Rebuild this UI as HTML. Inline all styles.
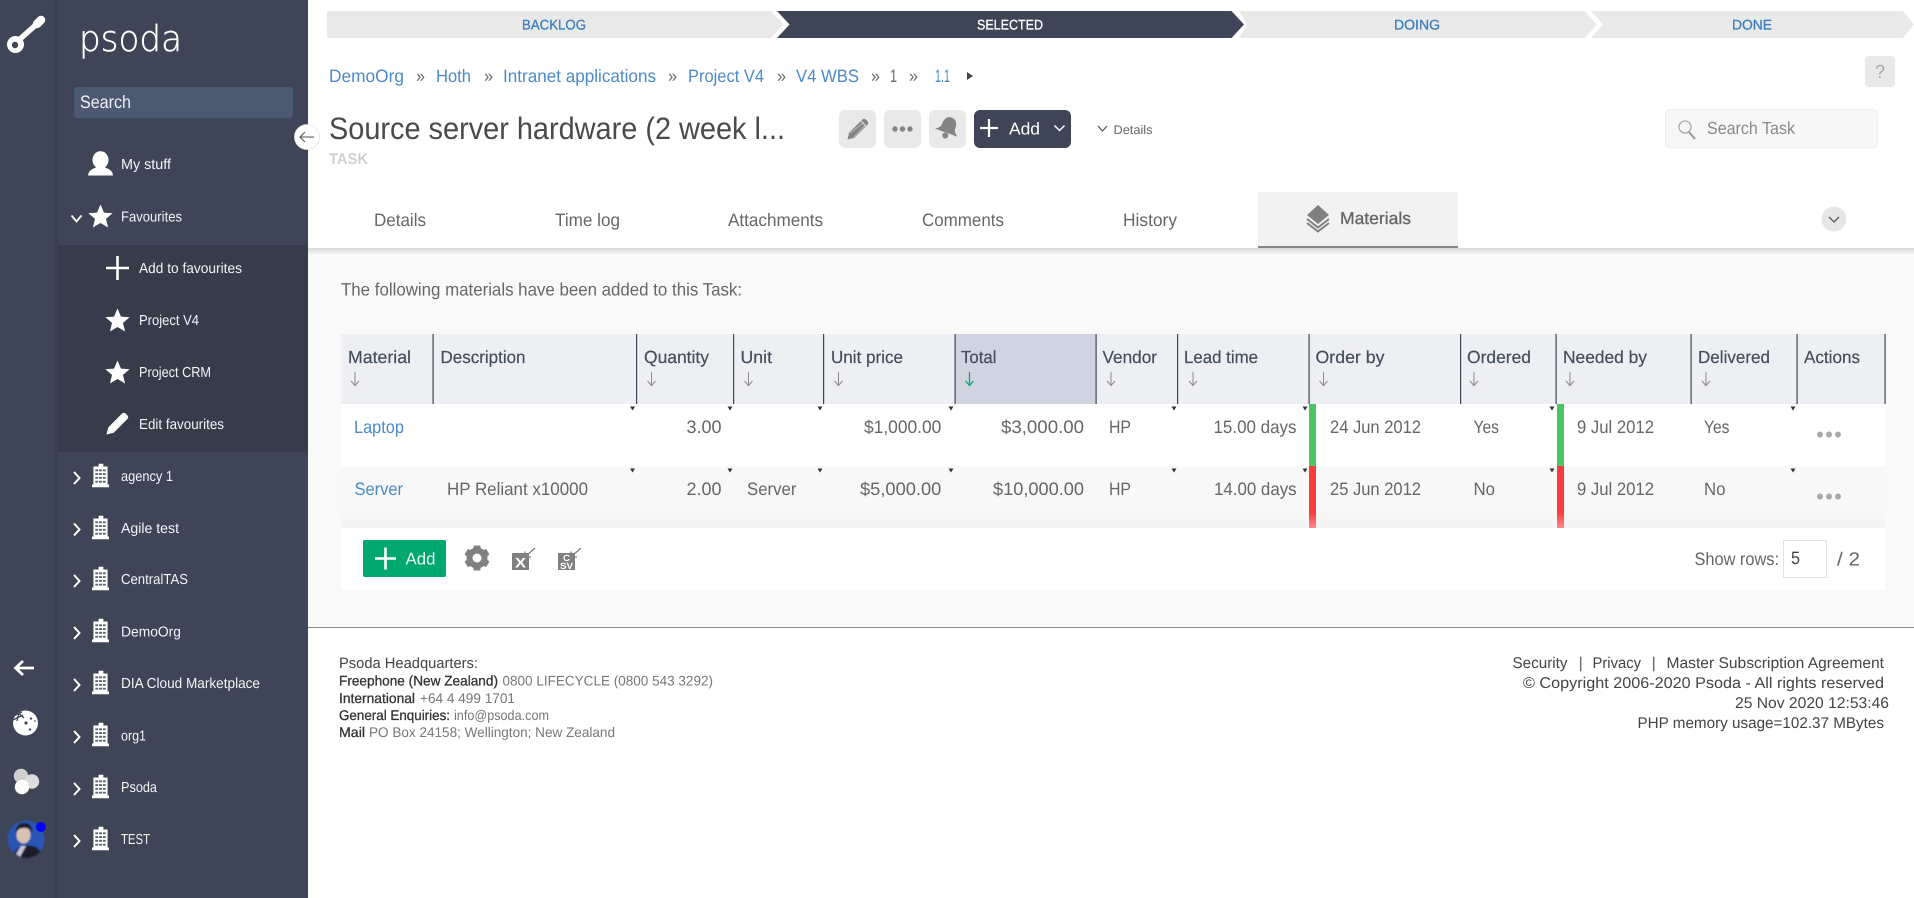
<!DOCTYPE html>
<html lang="en">
<head>
<meta charset="utf-8">
<title>Psoda - Materials</title>
<style>
html,body{margin:0;padding:0;background:#fff;width:1914px;height:898px;overflow:hidden}
svg{display:block}
text{font-family:"Liberation Sans","DejaVu Sans",sans-serif;text-rendering:geometricPrecision}
.s{fill:#f2f4f7;font-size:14.5px}
.h{fill:#444e5e;stroke:#444e5e;stroke-width:.2px;font-size:17.5px}
.c{fill:#666;font-size:18px}
.l{fill:#4a8ac9;font-size:18px}
.t{fill:#666;font-size:18px}
.b{fill:#4a8ac9;font-size:18px}
.p{fill:#3a7fc1;stroke:#3a7fc1;stroke-width:.3px;font-size:14px}
.f{fill:#333;stroke:#333;stroke-width:.3px;font-size:14px}
.g{fill:#777;font-size:14px}
.r{fill:#444;font-size:15.5px}
</style>
</head>
<body>
<svg xmlns="http://www.w3.org/2000/svg" width="1914" height="898" viewBox="0 0 1914 898">
<defs>
<linearGradient id="sh" x1="0" y1="0" x2="0" y2="1"><stop offset="0" stop-color="#d8d8d8"/><stop offset="1" stop-color="#f9f9f9"/></linearGradient>
<linearGradient id="rail" x1="0" y1="0" x2="1" y2="0"><stop offset="0" stop-color="#3d4556"/><stop offset="1" stop-color="#383f4e"/></linearGradient>
<linearGradient id="red" x1="0" y1="0" x2="0" y2="1"><stop offset="0" stop-color="#fb3c3c"/><stop offset=".75" stop-color="#fb3c3c"/><stop offset="1" stop-color="#f88"/></linearGradient>
<linearGradient id="row" x1="0" y1="0" x2="0" y2="1"><stop offset="0" stop-color="#f8f8f8"/><stop offset=".7" stop-color="#f8f8f8"/><stop offset="1" stop-color="#f3f3f3"/></linearGradient>
<filter id="soft"><feGaussianBlur stdDeviation=".7"/></filter>
<symbol id="star" viewBox="0 0 26 26" overflow="visible"><polygon points="13,0.5 16.6,9 25.6,9.6 18.7,15.5 20.9,24.5 13,19.7 5.1,24.5 7.3,15.5 0.4,9.6 9.4,9" fill="#fff"/></symbol>
<symbol id="bld" viewBox="0 0 18 25" overflow="visible">
<path d="M7 0h5v3H7zM1.500 3h15v19h-15z" fill="#fff"/>
<path d="M0 22h18v3H0z" fill="#fff"/>
<path d="M3.500 6h3v2h-3zM7.500 6h3v2h-3zM11.500 6h3v2h-3zM3.500 10h3v2h-3zM7.500 10h3v2h-3zM11.500 10h3v2h-3zM3.500 14h3v2h-3zM7.500 14h3v2h-3zM11.500 14h3v2h-3zM3.500 18h3v2h-3zM7.500 18h3v2h-3zM11.500 18h3v2h-3z" fill="#5a6274"/>
</symbol>
<symbol id="pen" viewBox="0 0 24 24" overflow="visible"><path d="M0.5 23.500 2.400 16 16.800 1.600c1-1 2.600-1 3.600 0l2 2c1 1 1 2.600 0 3.600L8 21.600z" fill="currentColor"/><path d="M3.600 16.400 17.800 5.200M7.600 20.400 20 8" stroke="#fff" stroke-opacity=".45" stroke-width="1" fill="none"/><path d="M15.200 3.200 20.800 8.800" stroke="#fff" stroke-opacity=".7" stroke-width="1.200"/></symbol>
</defs>

<!-- main backgrounds -->
<rect width="1914" height="898" fill="#fff"/>
<rect x="308" y="248" width="1606" height="379" fill="#f9f9f9"/>
<rect x="308" y="248" width="1606" height="7" fill="url(#sh)"/>
<rect x="308" y="627" width="1606" height="1" fill="#8a8a8a"/>

<!-- sidebar -->
<rect width="308" height="898" fill="#3d4556"/>
<rect x="52" width="6" height="898" fill="url(#rail)"/>
<rect x="58" y="245" width="250" height="207" fill="#363c49"/>
<path d="M20 39 38 23" stroke="#fff" stroke-width="5.500" stroke-linecap="round"/>
<path d="M37 24 41 20" stroke="#fff" stroke-width="8.500" stroke-linecap="round"/>
<circle cx="15.500" cy="44.500" r="8.500" fill="#fff"/><circle cx="15" cy="45" r="3.200" fill="#3d4556"/>
<text x="79" y="51" style="font-family:'DejaVu Sans',sans-serif;font-weight:200;font-size:36px;stroke:#fff;stroke-width:.4px" fill="#fff" textLength="103" lengthAdjust="spacingAndGlyphs">psoda</text>
<rect x="74" y="87" width="219" height="31" rx="3" fill="#4d5970"/>
<text x="80" y="108" fill="#eef0f3" font-size="18" textLength="51" lengthAdjust="spacingAndGlyphs">Search</text>

<ellipse cx="100.500" cy="160" rx="8" ry="8.800" fill="#fff"/>
<path d="M88 175.500c.5-5 4-6.500 8-8h9c4 1.500 7.500 3 8 8z" fill="#fff"/>
<text class="s" x="121" y="169" textLength="50" lengthAdjust="spacingAndGlyphs">My stuff</text>
<path d="M71.500 215.500 76.500 221.500 81.500 215.500" fill="none" stroke="#fff" stroke-width="1.800"/>
<use href="#star" x="88" y="204" width="25" height="25"/>
<text class="s" x="121" y="221.500" textLength="61" lengthAdjust="spacingAndGlyphs">Favourites</text>
<path d="M117.500 256v24M106 268h23" stroke="#fff" stroke-width="2.600"/>
<text class="s" x="139" y="273" textLength="103" lengthAdjust="spacingAndGlyphs">Add to favourites</text>
<use href="#star" x="105" y="308" width="25" height="25"/>
<text class="s" x="139" y="325" textLength="60" lengthAdjust="spacingAndGlyphs">Project V4</text>
<use href="#star" x="105" y="360" width="25" height="25"/>
<text class="s" x="139" y="377" textLength="72" lengthAdjust="spacingAndGlyphs">Project CRM</text>
<use href="#pen" x="106" y="412" width="23" height="23" color="#fff"/>
<text class="s" x="139" y="429" textLength="85" lengthAdjust="spacingAndGlyphs">Edit favourites</text>

<g fill="none" stroke="#fff" stroke-width="2">
<path d="M74 472 79.500 478 74 484"/><path d="M74 523.500 79.500 529.500 74 535.500"/><path d="M74 575 79.500 581 74 587"/><path d="M74 627 79.500 633 74 639"/><path d="M74 679 79.500 685 74 691"/><path d="M74 731 79.500 737 74 743"/><path d="M74 783 79.500 789 74 795"/><path d="M74 835 79.500 841 74 847"/>
</g>
<use href="#bld" x="92" y="463" width="17" height="25"/>
<use href="#bld" x="92" y="515" width="17" height="25"/>
<use href="#bld" x="92" y="566" width="17" height="25"/>
<use href="#bld" x="92" y="618" width="17" height="25"/>
<use href="#bld" x="92" y="670" width="17" height="25"/>
<use href="#bld" x="92" y="722" width="17" height="25"/>
<use href="#bld" x="92" y="774" width="17" height="25"/>
<use href="#bld" x="92" y="826" width="17" height="25"/>
<text class="s" x="121" y="481" textLength="52" lengthAdjust="spacingAndGlyphs">agency 1</text>
<text class="s" x="121" y="533" textLength="58" lengthAdjust="spacingAndGlyphs">Agile test</text>
<text class="s" x="121" y="584" textLength="67" lengthAdjust="spacingAndGlyphs">CentralTAS</text>
<text class="s" x="121" y="636.500" textLength="60" lengthAdjust="spacingAndGlyphs">DemoOrg</text>
<text class="s" x="121" y="688" textLength="139" lengthAdjust="spacingAndGlyphs">DIA Cloud Marketplace</text>
<text class="s" x="121" y="740.500" textLength="25" lengthAdjust="spacingAndGlyphs">org1</text>
<text class="s" x="121" y="792" textLength="36" lengthAdjust="spacingAndGlyphs">Psoda</text>
<text class="s" x="121" y="844" textLength="29" lengthAdjust="spacingAndGlyphs">TEST</text>

<!-- rail bottom icons -->
<path d="M16 668h18M23 661l-7.500 7 7.500 7" fill="none" stroke="#fff" stroke-width="2.800"/>
<circle cx="25.500" cy="723" r="12.500" fill="#fff"/>
<path d="M13 716l9-4M16 711l8 7M13 720l10-5M19 713l-2 8" stroke="#3d4556" stroke-width="1.300"/>
<path d="M26 721l2 2-2 2-2-2zM31 717l1.500 1.500-1.500 1.500-1.500-1.500zM35 720l1 1-1 1-1-1zM30 728l1.500 1.500-1.500 1.500-1.500-1.500z" fill="#3d4556"/>
<circle cx="21" cy="776" r="7.200" fill="#cfcfcf"/>
<circle cx="32" cy="781.500" r="7.200" fill="#dcdcdc"/>
<circle cx="22" cy="787" r="7.200" fill="#fff"/>
<g filter="url(#soft)">
<circle cx="26" cy="839" r="18.500" fill="#2a55b5"/>
<path d="M14 853c3-5 7-7 11-8l8 1c4 1 6 3 7 6a18.500 18.500 0 0 1-26 1z" fill="#1a1d2a"/>
<path d="M21 846l5 0-6 11-4-3z" fill="#c3c6dc"/>
<ellipse cx="23.500" cy="835" rx="7" ry="8.500" fill="#d8c0b2"/>
<path d="M16 833c-1-7 4-11 9-10 5 0 8 4 7 10-1-4-4-5-8-5s-6 1-8 5z" fill="#1d2230"/>
</g>
<circle cx="41" cy="827" r="5" fill="#0000ff"/>

<!-- collapse circle -->
<circle cx="307" cy="137" r="12.500" fill="#fff" stroke="#e5e5e5" stroke-width=".8"/>
<path d="M300 137h14M305 132l-5 5 5 5" fill="none" stroke="#555" stroke-width="1.100"/>

<!-- progress -->
<polygon points="327,11 771,11 783.500,24.500 771,38 327,38" fill="#e9e9e9"/>
<polygon points="777,11 1231.500,11 1244,24.500 1231.500,38 777,38 789.500,24.500" fill="#3d4556"/>
<polygon points="1239,11 1585,11 1596.500,24.500 1585,38 1239,38 1247,24.500" fill="#e9e9e9"/>
<polygon points="1591,11 1903,11 1914,24.500 1903,38 1591,38 1603,24.500" fill="#e9e9e9"/>
<text class="p" x="522" y="29.500" textLength="64" lengthAdjust="spacingAndGlyphs">BACKLOG</text>
<text class="p" x="977" y="29.500" textLength="66" lengthAdjust="spacingAndGlyphs" style="fill:#fff;stroke:#fff">SELECTED</text>
<text class="p" x="1394" y="29.500" textLength="46" lengthAdjust="spacingAndGlyphs">DOING</text>
<text class="p" x="1732" y="29.500" textLength="40" lengthAdjust="spacingAndGlyphs">DONE</text>

<!-- breadcrumb -->
<text class="b" x="329" y="82" textLength="75" lengthAdjust="spacingAndGlyphs">DemoOrg</text>
<text class="t" x="416" y="82" textLength="9" lengthAdjust="spacingAndGlyphs">»</text>
<text class="b" x="436" y="82" textLength="35" lengthAdjust="spacingAndGlyphs">Hoth</text>
<text class="t" x="484" y="82" textLength="9" lengthAdjust="spacingAndGlyphs">»</text>
<text class="b" x="503" y="82" textLength="153" lengthAdjust="spacingAndGlyphs">Intranet applications</text>
<text class="t" x="668" y="82" textLength="9" lengthAdjust="spacingAndGlyphs">»</text>
<text class="b" x="688" y="82" textLength="76" lengthAdjust="spacingAndGlyphs">Project V4</text>
<text class="t" x="777" y="82" textLength="9" lengthAdjust="spacingAndGlyphs">»</text>
<text class="b" x="796" y="82" textLength="63" lengthAdjust="spacingAndGlyphs">V4 WBS</text>
<text class="t" x="871" y="82" textLength="9" lengthAdjust="spacingAndGlyphs">»</text>
<text class="t" x="890" y="82" textLength="7" lengthAdjust="spacingAndGlyphs">1</text>
<text class="t" x="909" y="82" textLength="9" lengthAdjust="spacingAndGlyphs">»</text>
<text class="b" x="935" y="82" textLength="15" lengthAdjust="spacingAndGlyphs">1.1</text>
<polygon points="967,72 973,76 967,80" fill="#444"/>
<rect x="1865" y="56" width="30" height="31" rx="4" fill="#e9e9e9"/>
<text x="1875" y="78" font-size="19" fill="#aaa" textLength="10" lengthAdjust="spacingAndGlyphs">?</text>

<!-- title -->
<text x="329" y="139" font-size="31" fill="#4a4a4a" textLength="456" lengthAdjust="spacingAndGlyphs">Source server hardware (2 week l...</text>
<text x="329" y="164" font-size="15.500" font-weight="bold" fill="#cfcfcf" textLength="39" lengthAdjust="spacingAndGlyphs">TASK</text>

<rect x="839" y="110" width="37" height="38" rx="6" fill="#e9e9e9"/>
<use href="#pen" x="847" y="118" width="22" height="22" color="#848484"/>
<rect x="884" y="110" width="37" height="38" rx="6" fill="#e9e9e9"/>
<circle cx="895" cy="129" r="2.700" fill="#848484"/><circle cx="902.500" cy="129" r="2.700" fill="#848484"/><circle cx="910" cy="129" r="2.700" fill="#848484"/>
<rect x="929" y="110" width="37" height="38" rx="6" fill="#e9e9e9"/>
<g transform="rotate(20 948 128)" fill="#848484"><path d="M948 117c5 0 7 4 7 9 0 3 2 5 5 7H936c3-2 5-4 5-7 0-5 2-9 7-9z"/><circle cx="948" cy="136" r="3"/></g>
<rect x="974" y="110" width="97" height="38" rx="6" fill="#3d4556"/>
<path d="M989 119v18M980 128h18" stroke="#fff" stroke-width="2.200" fill="none"/>
<text x="1009" y="134.500" font-size="17" fill="#fff" textLength="31" lengthAdjust="spacingAndGlyphs">Add</text>
<path d="M1054.500 125.500 1059.500 130.500 1064.500 125.500" fill="none" stroke="#fff" stroke-width="1.500"/>
<path d="M1098 126 1102.500 131 1107 126" fill="none" stroke="#555" stroke-width="1.200"/>
<text x="1113.500" y="134" font-size="12.500" fill="#666" textLength="39" lengthAdjust="spacingAndGlyphs">Details</text>

<rect x="1665.500" y="109.500" width="212" height="38.500" rx="5" fill="#f7f7f7" stroke="#ececec"/>
<circle cx="1685" cy="127" r="6" fill="none" stroke="#aaa" stroke-width="1.300"/>
<path d="M1689 132l6 7" stroke="#999" stroke-width="2"/>
<text x="1707" y="134" font-size="17.500" fill="#8a8a8a" textLength="88" lengthAdjust="spacingAndGlyphs">Search Task</text>

<!-- tabs -->
<text class="t" x="374" y="226" textLength="52" lengthAdjust="spacingAndGlyphs">Details</text>
<text class="t" x="555" y="226" textLength="65" lengthAdjust="spacingAndGlyphs">Time log</text>
<text class="t" x="728" y="226" textLength="95" lengthAdjust="spacingAndGlyphs">Attachments</text>
<text class="t" x="922" y="226" textLength="82" lengthAdjust="spacingAndGlyphs">Comments</text>
<text class="t" x="1123" y="226" textLength="54" lengthAdjust="spacingAndGlyphs">History</text>
<rect x="1258" y="192" width="200" height="56" fill="#f2f2f2"/>
<rect x="1258" y="246" width="200" height="2" fill="#868686"/>
<polygon points="1318,205 1329,215 1318,224 1307,215" fill="#808080"/>
<path d="M1307 219l11 8.500 11-8.500M1307 223l11 8.500 11-8.500" fill="none" stroke="#808080" stroke-width="2"/>
<text x="1340" y="224" font-size="17" fill="#666" stroke="#666" stroke-width=".3" textLength="71" lengthAdjust="spacingAndGlyphs">Materials</text>
<circle cx="1834" cy="219" r="12.500" fill="#e6e6e6"/>
<path d="M1829 217l5 5 5-5" fill="none" stroke="#555" stroke-width="1.300"/>

<text class="t" x="341" y="295.500" textLength="401" lengthAdjust="spacingAndGlyphs">The following materials have been added to this Task:</text>

<!-- table -->
<rect x="341" y="334" width="1544" height="256" fill="#fff"/>
<rect x="341" y="334" width="1544" height="70" fill="#eeeff3"/>
<rect x="955" y="334" width="141" height="70" fill="#d0d4e0"/>
<rect x="341" y="466" width="1544" height="62" fill="url(#row)"/>
<g fill="#3d4556">
<rect x="432.500" y="334" width="1.200" height="70"/><rect x="636" y="334" width="1.200" height="70"/><rect x="733" y="334" width="1.200" height="70"/><rect x="823" y="334" width="1.200" height="70"/><rect x="954.500" y="334" width="1.200" height="70"/><rect x="1095.500" y="334" width="1.200" height="70"/><rect x="1177" y="334" width="1.200" height="70"/><rect x="1308.500" y="334" width="1.200" height="70"/><rect x="1460" y="334" width="1.200" height="70"/><rect x="1555.500" y="334" width="1.200" height="70"/><rect x="1690.500" y="334" width="1.200" height="70"/><rect x="1796.500" y="334" width="1.200" height="70"/><rect x="1884.500" y="334" width="1.200" height="70"/>
</g>
<text class="h" x="348" y="363" textLength="63" lengthAdjust="spacingAndGlyphs">Material</text>
<text class="h" x="440.500" y="363" textLength="85" lengthAdjust="spacingAndGlyphs">Description</text>
<text class="h" x="644" y="363" textLength="65" lengthAdjust="spacingAndGlyphs">Quantity</text>
<text class="h" x="740.500" y="363" textLength="31.500" lengthAdjust="spacingAndGlyphs">Unit</text>
<text class="h" x="831" y="363" textLength="72" lengthAdjust="spacingAndGlyphs">Unit price</text>
<text class="h" x="961" y="363" textLength="35.500" lengthAdjust="spacingAndGlyphs">Total</text>
<text class="h" x="1102.500" y="363" textLength="54.500" lengthAdjust="spacingAndGlyphs">Vendor</text>
<text class="h" x="1184" y="363" textLength="74" lengthAdjust="spacingAndGlyphs">Lead time</text>
<text class="h" x="1315.500" y="363" textLength="69" lengthAdjust="spacingAndGlyphs">Order by</text>
<text class="h" x="1467" y="363" textLength="64" lengthAdjust="spacingAndGlyphs">Ordered</text>
<text class="h" x="1563" y="363" textLength="84" lengthAdjust="spacingAndGlyphs">Needed by</text>
<text class="h" x="1698" y="363" textLength="72" lengthAdjust="spacingAndGlyphs">Delivered</text>
<text class="h" x="1804" y="363" textLength="56" lengthAdjust="spacingAndGlyphs">Actions</text>
<g fill="none" stroke="#888" stroke-width="1">
<path d="M355 372v13M351 381l4 4.500 4-4.500"/><path d="M651.500 372v13M647.500 381l4 4.500 4-4.500"/><path d="M748.500 372v13M744.500 381l4 4.500 4-4.500"/><path d="M838.500 372v13M834.500 381l4 4.500 4-4.500"/>
<path d="M1111 372v13M1107 381l4 4.500 4-4.500"/><path d="M1193 372v13M1189 381l4 4.500 4-4.500"/><path d="M1323.500 372v13M1319.500 381l4 4.500 4-4.500"/><path d="M1474 372v13M1470 381l4 4.500 4-4.500"/><path d="M1570 372v13M1566 381l4 4.500 4-4.500"/><path d="M1706 372v13M1702 381l4 4.500 4-4.500"/>
<path d="M969.500 372v13M965.500 381l4 4.500 4-4.500" stroke="#00a86f" stroke-width="1.200"/>
</g>
<rect x="1309" y="404" width="7" height="62" fill="#4cc464"/>
<rect x="1557" y="404" width="7" height="62" fill="#4cc464"/>
<rect x="1309" y="466" width="7" height="62" fill="url(#red)"/>
<rect x="1557" y="466" width="7" height="62" fill="url(#red)"/>
<g fill="#333">
<path d="M630 406.500h5l-2.500 4zM727.500 406.500h5l-2.500 4zM817.500 406.500h5l-2.500 4zM948.500 406.500h5l-2.500 4zM1171.500 406.500h5l-2.500 4zM1302.500 406.500h5l-2.500 4zM1549.500 406.500h5l-2.500 4zM1790.500 406.500h5l-2.500 4z"/>
<path d="M630 468.500h5l-2.500 4zM727.500 468.500h5l-2.500 4zM817.500 468.500h5l-2.500 4zM948.500 468.500h5l-2.500 4zM1171.500 468.500h5l-2.500 4zM1302.500 468.500h5l-2.500 4zM1549.500 468.500h5l-2.500 4zM1790.500 468.500h5l-2.500 4z"/>
</g>

<text class="l" x="354" y="433" textLength="50" lengthAdjust="spacingAndGlyphs">Laptop</text>
<text class="c" x="686.500" y="433" textLength="35" lengthAdjust="spacingAndGlyphs">3.00</text>
<text class="c" x="864" y="433" textLength="77.300" lengthAdjust="spacingAndGlyphs">$1,000.00</text>
<text class="c" x="1001" y="433" textLength="83" lengthAdjust="spacingAndGlyphs">$3,000.00</text>
<text class="c" x="1109" y="433" textLength="22" lengthAdjust="spacingAndGlyphs">HP</text>
<text class="c" x="1213.500" y="433" textLength="83" lengthAdjust="spacingAndGlyphs">15.00 days</text>
<text class="c" x="1330" y="433" textLength="91" lengthAdjust="spacingAndGlyphs">24 Jun 2012</text>
<text class="c" x="1473.500" y="433" textLength="25.500" lengthAdjust="spacingAndGlyphs">Yes</text>
<text class="c" x="1577" y="433" textLength="77" lengthAdjust="spacingAndGlyphs">9 Jul 2012</text>
<text class="c" x="1704" y="433" textLength="25.500" lengthAdjust="spacingAndGlyphs">Yes</text>
<circle cx="1820" cy="434.500" r="3" fill="#a8a8a8"/><circle cx="1829" cy="434.500" r="3" fill="#a8a8a8"/><circle cx="1838" cy="434.500" r="3" fill="#a8a8a8"/>

<text class="l" x="354.500" y="495" textLength="48.500" lengthAdjust="spacingAndGlyphs">Server</text>
<text class="c" x="447" y="495" textLength="141" lengthAdjust="spacingAndGlyphs">HP Reliant x10000</text>
<text class="c" x="686.500" y="495" textLength="35" lengthAdjust="spacingAndGlyphs">2.00</text>
<text class="c" x="747" y="495" textLength="49.500" lengthAdjust="spacingAndGlyphs">Server</text>
<text class="c" x="860" y="495" textLength="81.300" lengthAdjust="spacingAndGlyphs">$5,000.00</text>
<text class="c" x="993" y="495" textLength="91" lengthAdjust="spacingAndGlyphs">$10,000.00</text>
<text class="c" x="1109" y="495" textLength="22" lengthAdjust="spacingAndGlyphs">HP</text>
<text class="c" x="1214" y="495" textLength="82.600" lengthAdjust="spacingAndGlyphs">14.00 days</text>
<text class="c" x="1330" y="495" textLength="91" lengthAdjust="spacingAndGlyphs">25 Jun 2012</text>
<text class="c" x="1473.500" y="495" textLength="21.500" lengthAdjust="spacingAndGlyphs">No</text>
<text class="c" x="1577" y="495" textLength="77" lengthAdjust="spacingAndGlyphs">9 Jul 2012</text>
<text class="c" x="1704" y="495" textLength="21.500" lengthAdjust="spacingAndGlyphs">No</text>
<circle cx="1820" cy="496.500" r="3" fill="#a8a8a8"/><circle cx="1829" cy="496.500" r="3" fill="#a8a8a8"/><circle cx="1838" cy="496.500" r="3" fill="#a8a8a8"/>

<!-- table toolbar -->
<rect x="363" y="540" width="83" height="37" rx="2" fill="#00a86f"/>
<path d="M385.500 547.500v22M375 558.500h21" stroke="#fff" stroke-width="2.600"/>
<text x="405.500" y="564.500" font-size="17" fill="#e8f7f1" textLength="30" lengthAdjust="spacingAndGlyphs">Add</text>
<circle cx="477" cy="558" r="7.500" fill="none" stroke="#808080" stroke-width="6"/>
<g fill="#808080">
<rect x="473.500" y="545.500" width="7" height="4" rx="1"/>
<rect x="473.500" y="545.500" width="7" height="4" rx="1" transform="rotate(60 477 558)"/>
<rect x="473.500" y="545.500" width="7" height="4" rx="1" transform="rotate(120 477 558)"/>
<rect x="473.500" y="545.500" width="7" height="4" rx="1" transform="rotate(180 477 558)"/>
<rect x="473.500" y="545.500" width="7" height="4" rx="1" transform="rotate(240 477 558)"/>
<rect x="473.500" y="545.500" width="7" height="4" rx="1" transform="rotate(300 477 558)"/>
</g>
<rect x="512" y="553" width="17" height="17" fill="#808080"/>
<text x="515" y="567.500" font-size="14" font-weight="bold" fill="#fff" textLength="11" lengthAdjust="spacingAndGlyphs">X</text>
<path d="M535 548l-10 9M525 551.500v5.500h6" fill="none" stroke="#808080" stroke-width="1.300"/>
<rect x="558" y="553" width="17" height="17" fill="#808080"/>
<text x="563" y="561" font-size="9" font-weight="bold" fill="#fff" textLength="7" lengthAdjust="spacingAndGlyphs">C</text>
<text x="560" y="569" font-size="9" font-weight="bold" fill="#fff" textLength="13" lengthAdjust="spacingAndGlyphs">SV</text>
<path d="M581 548l-10 9M571 551.500v5.500h6" fill="none" stroke="#808080" stroke-width="1.300"/>
<text class="t" x="1694.500" y="565" textLength="84.500" lengthAdjust="spacingAndGlyphs">Show rows:</text>
<rect x="1783.500" y="540.500" width="43" height="37" fill="#fff" stroke="#e3e3e3"/>
<text x="1791" y="564" font-size="18" fill="#444" textLength="9" lengthAdjust="spacingAndGlyphs">5</text>
<text x="1837" y="565.500" font-size="19" fill="#666" textLength="23" lengthAdjust="spacingAndGlyphs">/ 2</text>

<!-- footer left -->
<text x="339" y="668" font-size="15" fill="#444" textLength="139" lengthAdjust="spacingAndGlyphs">Psoda Headquarters:</text>
<text class="f" x="339" y="685.500" textLength="159" lengthAdjust="spacingAndGlyphs">Freephone (New Zealand)</text>
<text class="g" x="502.500" y="685.500" textLength="210.500" lengthAdjust="spacingAndGlyphs">0800 LIFECYCLE (0800 543 3292)</text>
<text class="f" x="339" y="703" textLength="76" lengthAdjust="spacingAndGlyphs">International</text>
<text class="g" x="420" y="703" textLength="95" lengthAdjust="spacingAndGlyphs">+64 4 499 1701</text>
<text class="f" x="339" y="720" textLength="111" lengthAdjust="spacingAndGlyphs">General Enquiries:</text>
<text class="g" x="454" y="720" textLength="95" lengthAdjust="spacingAndGlyphs">info@psoda.com</text>
<text class="f" x="339" y="737" textLength="26" lengthAdjust="spacingAndGlyphs">Mail</text>
<text class="g" x="369" y="737" textLength="246" lengthAdjust="spacingAndGlyphs">PO Box 24158; Wellington; New Zealand</text>

<!-- footer right -->
<text class="r" x="1512.500" y="668" textLength="55" lengthAdjust="spacingAndGlyphs">Security</text>
<text class="r" x="1579" y="668" textLength="3.500" lengthAdjust="spacingAndGlyphs">|</text>
<text class="r" x="1592.500" y="668" textLength="48.500" lengthAdjust="spacingAndGlyphs">Privacy</text>
<text class="r" x="1652" y="668" textLength="3.500" lengthAdjust="spacingAndGlyphs">|</text>
<text class="r" x="1666.500" y="668" textLength="217.500" lengthAdjust="spacingAndGlyphs">Master Subscription Agreement</text>
<text class="r" x="1523" y="688" textLength="361" lengthAdjust="spacingAndGlyphs">© Copyright 2006-2020 Psoda - All rights reserved</text>
<text class="r" x="1735" y="708" textLength="154" lengthAdjust="spacingAndGlyphs">25 Nov 2020 12:53:46</text>
<text class="r" x="1637.500" y="728" textLength="246.500" lengthAdjust="spacingAndGlyphs">PHP memory usage=102.37 MBytes</text>
</svg>
</body>
</html>
